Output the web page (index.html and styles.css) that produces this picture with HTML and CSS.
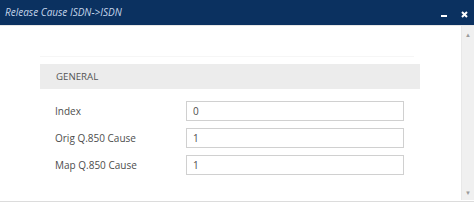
FILE: index.html
```html
<!DOCTYPE html>
<html lang="en">
<head>
    <meta charset="UTF-8">
    <title>Release Cause ISDN-&gt;ISDN</title>
    <link rel="stylesheet" href="styles.css">
</head>
<body>
    <div class="window">
        <div class="titlebar">
            <span class="title">Release Cause ISDN-&gt;ISDN</span>
            <div class="controls">
                <span class="minimize"></span>
                <svg class="close" width="7" height="7" viewBox="0 0 7 7">
                    <path d="M1 1 L6 6 M6 1 L1 6" stroke="#fff" stroke-width="2"/>
                </svg>
            </div>
        </div>
        <div class="body">
            <div class="panel">
                <div class="divider"></div>
                <div class="section">GENERAL</div>
                <div class="row">
                    <label>Index</label>
                    <input type="text" value="0">
                </div>
                <div class="row">
                    <label>Orig Q.850 Cause</label>
                    <input type="text" value="1">
                </div>
                <div class="row">
                    <label>Map Q.850 Cause</label>
                    <input type="text" value="1">
                </div>
            </div>
            <div class="scrollbar">
                <span class="arrow up">&#9650;</span>
                <span class="arrow down">&#9660;</span>
            </div>
        </div>
    </div>
</body>
</html>
```

FILE: styles.css
```css
body {
    margin: 0;
    padding: 0;
    font-family: "Open Sans", Arial, sans-serif;
    background: #fff;
    color: #4a4a4a;
}
.window {
    width: 474px;
    height: 201px;
    border-bottom: 1px solid #dcdcdc;
}
.titlebar {
    height: 25px;
    background: #0b3160;
    border-bottom: 1px solid #e6e6e6;
    display: flex;
    align-items: center;
    justify-content: space-between;
    padding: 0 6px 0 5px;
}
.title {
    font-style: italic;
    font-size: 10px;
    color: #c5d5ea;
    margin-top: -1px;
}
.controls {
    display: flex;
    align-items: center;
    gap: 14px;
    margin-top: 4px;
}
.minimize {
    display: block;
    width: 6px;
    height: 2px;
    background: #fff;
    margin-top: 3px;
}
.body {
    display: flex;
    height: 174px;
}
.panel {
    flex: 1;
    padding: 30px 41px 0 40px;
}
.divider {
    height: 1px;
    background: #f6f6f6;
    margin: 0 6px 7px 0;
}
.section {
    height: 25px;
    background: #ececec;
    font-size: 9.7px;
    color: #555;
    padding-left: 16px;
    display: flex;
    align-items: center;
    margin-bottom: 12px;
}
.row {
    display: flex;
    align-items: center;
    height: 20px;
    margin-bottom: 7px;
    padding-left: 15px;
}
.row label {
    width: 131px;
    font-size: 10px;
    color: #4d4d4d;
}
.row input {
    box-sizing: border-box;
    width: 218px;
    height: 20px;
    border: 1px solid #d0d0d0;
    padding: 0 6px;
    font-family: "Open Sans", Arial, sans-serif;
    font-size: 10px;
    color: #4d4d4d;
}
.scrollbar {
    width: 13px;
    background: #f0f0f0;
    border-left: 1px solid #e8e8e8;
    display: flex;
    flex-direction: column;
    justify-content: space-between;
    align-items: center;
    padding: 5px 0 3px;
    box-sizing: border-box;
}
.arrow {
    font-size: 6px;
    color: #9a9a9a;
}
```
